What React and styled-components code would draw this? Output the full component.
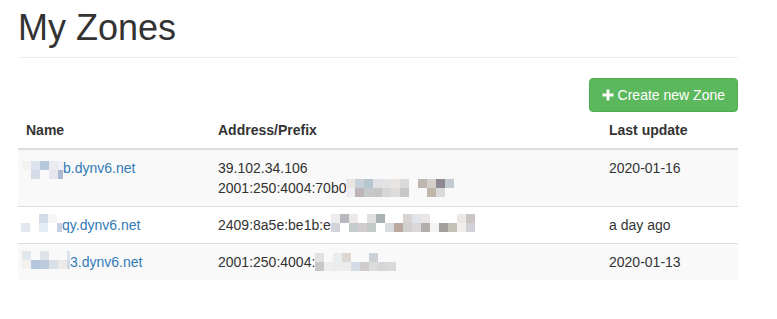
import React from 'react';
import styled, { createGlobalStyle } from 'styled-components';

const GlobalStyle = createGlobalStyle`
    html, body {
        margin: 0;
        padding: 0;
        background: #fff;
    }
    body {
        font-family: "Liberation Sans", Arial, Helvetica, sans-serif;
        font-size: 14px;
        line-height: 1.42857143;
        color: #333;
    }
`;

const Container = styled.div`
    width: 720px;
    padding-left: 18px;
    box-sizing: content-box;
`;

const PageHeader = styled.div`
    margin: 8px 0 20px;
    padding-bottom: 9px;
    border-bottom: 1px solid #eee;
`;

const Title = styled.h1`
    margin: 0;
    font-size: 36px;
    font-weight: 500;
    line-height: 1.1;
    color: #333;
`;

const Toolbar = styled.div`
    display: flex;
    justify-content: flex-end;
`;

const SuccessButton = styled.button`
    display: inline-flex;
    align-items: center;
    gap: 4px;
    height: 34px;
    padding: 6px 12px;
    font-family: inherit;
    font-size: 14px;
    line-height: 20px;
    color: #fff;
    background-color: #5cb85c;
    border: 1px solid #4cae4c;
    border-radius: 4px;
    cursor: pointer;
`;

const Table = styled.table`
    width: 100%;
    border-collapse: collapse;
    border-spacing: 0;
    margin-bottom: 20px;

    th {
        text-align: left;
        font-weight: bold;
        padding: 8px;
        line-height: 20px;
        border-bottom: 2px solid #ddd;
        vertical-align: bottom;
    }

    td {
        padding: 8px;
        line-height: 20px;
        vertical-align: top;
        border-top: 1px solid #ddd;
    }

    tbody tr:nth-of-type(odd) {
        background-color: #f9f9f9;
    }
`;

const ZoneLink = styled.a`
    color: #337ab7;
    text-decoration: none;
    white-space: nowrap;
`;

const Line = styled.div`
    white-space: nowrap;
`;

/* pixelated (blurred) part of a hostname / address */
const MosaicGrid = styled.span`
    display: inline-grid;
    grid-template-columns: repeat(${(p) => p.$cols}, 9px);
    grid-auto-rows: 9px;
    width: ${(p) => p.$width}px;
    height: 18px;
    margin-left: ${(p) => p.$ml || 0}px;
    overflow: hidden;
    vertical-align: top;
    position: relative;
    top: ${(p) => p.$shift}px;
`;

const Cell = styled.span`
    background: ${(p) => p.$c};
`;

const Mosaic = ({ rows, width, shift, ml }) => {
    const cols = rows[0].length;
    return (
        <MosaicGrid $cols={cols} $width={width || cols * 9} $shift={shift} $ml={ml}>
            {rows.flat().map((c, i) => (
                <Cell key={i} $c={c || 'transparent'} />
            ))}
        </MosaicGrid>
    );
};

const PlusIcon = () => (
    <svg width="12" height="12" viewBox="0 0 12 12" aria-hidden="true">
        <path d="M4.6 0.5h2.8v4.1h4.1v2.8H7.4v4.1H4.6V7.4H0.5V4.6h4.1z" fill="#fff" />
    </svg>
);

const _ = null;

const zones = [
    {
        prefixMosaic: {
            rows: [
                ['#f3f3f3', '#dbe4ee', '#b6c8da', '#e8ebf1', '#eef1f7'],
                [_, '#d4dbe6', _, '#e6e6ec', '#a9bad1'],
            ],
            width: 41,
            shift: 3,
            ml: -4,
        },
        name: 'b.dynv6.net',
        addresses: [
            { text: '39.102.34.106' },
            {
                text: '2001:250:4004:70b0',
                mosaic: {
                    rows: [
                        ['#e8e5e2', '#c9d1d8', '#b5c7cd', '#dfe1e4', '#e3e3e3', '#e9e5e3', '#dcdad8', _, '#bcb6ae', '#d4cfca', '#8e8890', '#c3cad1'],
                        ['#eeeef2', '#bdb4b8', '#c6c9cc', '#c6c6c6', '#d6d6d4', '#dcdcdc', '#c7c7c7', _, _, '#bfb8aa', '#d9dad9', _],
                    ],
                    shift: 1,
                },
            },
        ],
        updated: '2020-01-16',
    },
    {
        prefixMosaic: {
            rows: [
                [_, _, '#d3dbe6', '#f6f6f6', _],
                ['#e3e8ef', _, '#e4ecf4', _, '#c8d1e2'],
            ],
            width: 41,
            shift: -1,
            ml: -5,
        },
        name: 'qy.dynv6.net',
        addresses: [
            {
                text: '2409:8a5e:be1b:e',
                mosaic: {
                    rows: [
                        ['#ececec', '#b8b6bf', '#ede9e9', _, '#dfdfdf', '#a9b2b3', _, _, '#d8d2d2', '#dfe5ea', '#ebe6e6', _, _, _, '#ece8e6', '#cbc6c4'],
                        ['#d4d2da', _, '#c4cccd', '#d1ccce', '#c2c9c7', _, '#d8dce0', '#bba99f', '#d2d0ce', '#dad8d8', '#b1aeab', '#f4f4f6', '#a09f9c', '#c2c2b9', '#f1efeb', '#d1d1d8'],
                    ],
                    shift: -1,
                },
            },
        ],
        updated: 'a day ago',
    },
    {
        prefixMosaic: {
            rows: [
                ['#e2e6ed', _, '#e0e4ea', _, _, '#dde4ee'],
                ['#f5f1ef', '#b3c6dc', '#bccadb', '#dae0e8', '#eeeaea', '#d0d8e6'],
            ],
            width: 48,
            shift: -1,
            ml: -4,
        },
        name: '3.dynv6.net',
        addresses: [
            {
                text: '2001:250:4004:',
                mosaic: {
                    rows: [
                        ['#e4e0df', _, '#e8edf0', '#dcd7d2', _, _, '#ccd1d7', _, _],
                        ['#c7c6c9', '#eeeeee', '#ececec', '#ececec', '#d4dde5', '#d0cacc', '#dcdcdc', '#d6d6d9', '#d9d9d9'],
                    ],
                    shift: 1,
                },
            },
        ],
        updated: '2020-01-13',
    },
];

const App = () => (
    <>
        <GlobalStyle />
        <Container>
            <PageHeader>
                <Title>My Zones</Title>
            </PageHeader>
            <Toolbar>
                <SuccessButton type="button">
                    <PlusIcon />
                    Create new Zone
                </SuccessButton>
            </Toolbar>
            <Table>
                <colgroup>
                    <col style={{ width: 192 }} />
                    <col style={{ width: 391 }} />
                    <col />
                </colgroup>
                <thead>
                    <tr>
                        <th>Name</th>
                        <th>Address/Prefix</th>
                        <th>Last update</th>
                    </tr>
                </thead>
                <tbody>
                    {zones.map((zone) => (
                        <tr key={zone.name}>
                            <td>
                                <ZoneLink href="#">
                                    <Mosaic {...zone.prefixMosaic} />
                                    {zone.name}
                                </ZoneLink>
                            </td>
                            <td>
                                {zone.addresses.map((addr) => (
                                    <Line key={addr.text}>
                                        {addr.text}
                                        {addr.mosaic && <Mosaic {...addr.mosaic} />}
                                    </Line>
                                ))}
                            </td>
                            <td>{zone.updated}</td>
                        </tr>
                    ))}
                </tbody>
            </Table>
        </Container>
    </>
);

export default App;
